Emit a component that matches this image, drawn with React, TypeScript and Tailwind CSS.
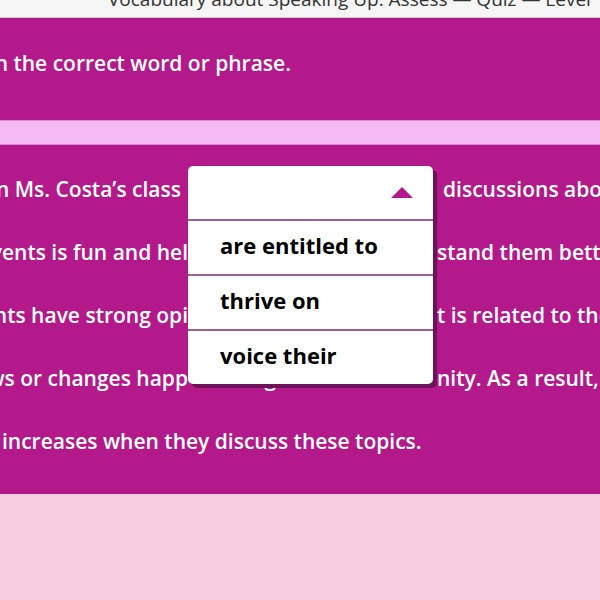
import React from 'react'

const options = ['are entitled to', 'thrive on', 'voice their']

function Dropdown() {
  return (
    <div className="relative mt-[8px] h-[53px] w-[245px] shrink-0 rounded-t-[5px] bg-white shadow-[4px_4px_0_#6d1159]">
      <div className="flex h-full items-center justify-end pr-[20px]">
        <svg width="22" height="11" viewBox="0 0 22 11">
          <polygon points="0,11 11,0 22,11" fill="#b3198b" />
        </svg>
      </div>
      <ul className="absolute left-0 top-full w-full rounded-b-[5px] bg-white shadow-[4px_4px_0_#6d1159]">
        {options.map((o) => (
          <li
            key={o}
            className="flex h-[55px] items-center border-t-2 border-[#9e5f92] pb-[5px] pl-[32px] text-[22px] font-bold text-black"
          >
            {o}
          </li>
        ))}
      </ul>
    </div>
  )
}

function Line({ left, hidden, right }: { left: string; hidden: string; right: string }) {
  return (
    <div className="flex h-[63px] items-center whitespace-nowrap">
      <div className="flex w-[188px] shrink-0 justify-end">{left}</div>
      <div className="flex w-[249px] shrink-0 justify-end overflow-hidden">{hidden}</div>
      <div className="shrink-0">{right}</div>
    </div>
  )
}

export default function App() {
  return (
    <div className="h-[600px] w-[600px] overflow-hidden bg-[#f8cce0] font-['Open_Sans',sans-serif]">
      <div className="h-[18px] overflow-hidden border-b border-[#c9c9c9] bg-[#f6f6f6]">
        <div className="-mt-[11px] whitespace-nowrap pl-[108px] text-[19px] leading-[20px] text-[#333]">
          Vocabulary about Speaking Up: Assess — Quiz — Level 1
        </div>
      </div>

      <div className="flex h-[102px] items-center bg-[#b3198b] pb-[11px] text-[21px] font-semibold text-white">
        <div className="flex w-[8px] shrink-0 justify-end whitespace-nowrap">Choose from the dropdown to fill in</div>
        <div className="whitespace-nowrap">&nbsp;the correct word or phrase.</div>
      </div>

      <div className="h-[25px] border-y border-[#d98bd3] bg-[#f5b9f4]" />

      <div className="h-[349px] bg-[#b3198b] pt-[13px] text-[21px] font-semibold text-white">
        <div className="flex h-[63px] items-start whitespace-nowrap">
          <div className="flex h-[63px] w-[181px] shrink-0 items-center justify-end">In Ms. Costa’s class</div>
          <div className="ml-[7px] flex">
            <Dropdown />
          </div>
          <div className="ml-[10px] flex h-[63px] shrink-0 items-center">discussions about current events.</div>
        </div>
        <Line left="Discussing current events is fun and hel" hidden="ps them under" right="stand them better." />
        <Line left="Students have strong opi" hidden="nions about wha" right="t is related to them" />
        <Line left="like news or changes happ" hidden="ening in their commu" right="nity. As a result," />
        <div className="flex h-[63px] items-center whitespace-nowrap pl-[2px]">
          increases when they discuss these topics.
        </div>
      </div>
    </div>
  )
}
